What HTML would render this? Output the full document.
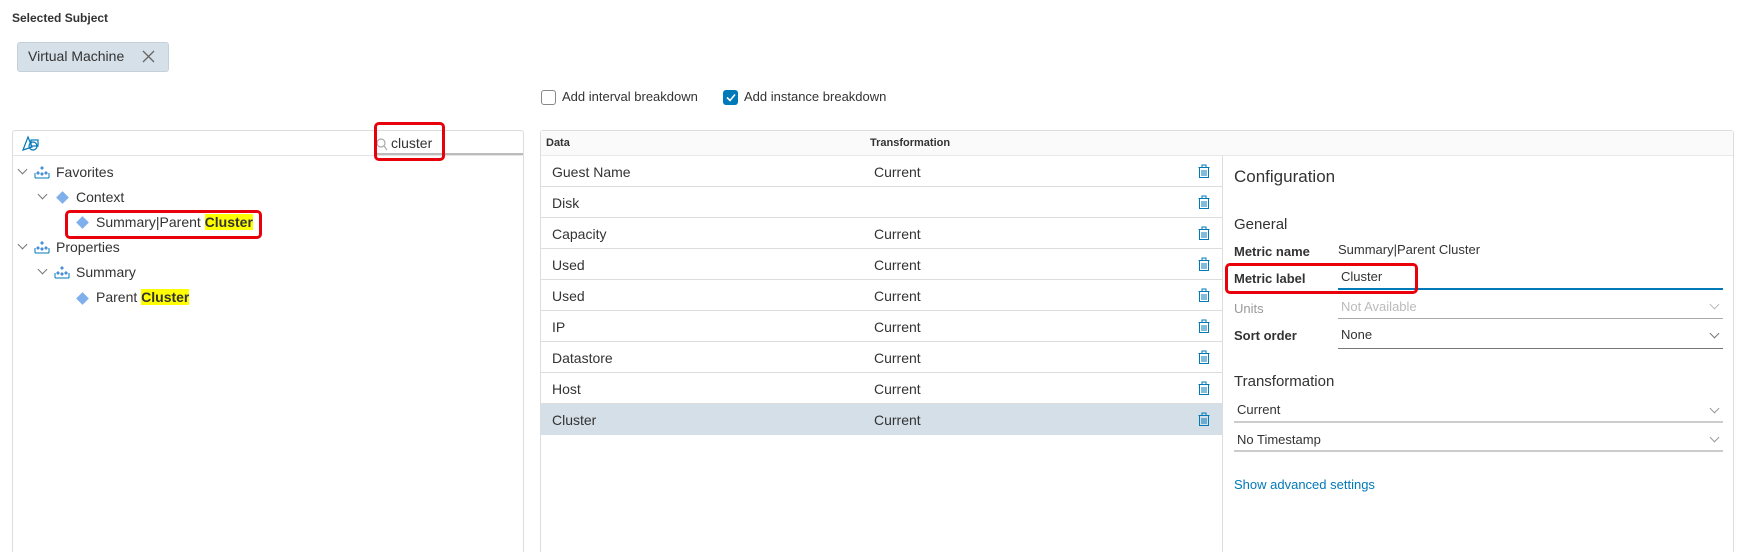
<!DOCTYPE html>
<html style="width:1741px;height:552px;overflow:hidden"><head><meta charset="utf-8"><style>
*{box-sizing:border-box;margin:0;padding:0}
body{width:1741px;height:552px;background:#fff;font-family:"Liberation Sans",sans-serif;color:#333;position:relative;overflow:hidden;font-size:14px}
.a{position:absolute;white-space:nowrap}
.b{font-weight:bold}
.red{position:absolute;border:3px solid #e8000b;border-radius:5px}
.row{position:absolute;left:541px;width:681px;height:31px;border-bottom:1px solid #ddd}
.row span{position:absolute;top:8px}
.trash{position:absolute;left:657px;top:8px}
.ul{position:absolute;height:1px;background:#aaa}
.chev{position:absolute;width:7px;height:7px;border-right:1.3px solid #777;border-bottom:1.3px solid #777;transform:rotate(45deg)}
.dia{position:absolute;width:9px;height:9px;background:#7fb0ec;transform:rotate(45deg)}
.hl{background:#ffff00;font-weight:bold}
</style></head><body>
<div class="a b" style="left:12px;top:11px;font-size:12px;color:#333">Selected Subject</div>
<div class="a" style="left:17px;top:42px;width:152px;height:30px;background:#d6e0e8;border:1px solid #c5d1da;border-radius:3px"></div>
<div class="a" style="left:28px;top:48px;font-size:14px">Virtual Machine</div>
<svg class="a" style="left:142px;top:50px" width="13" height="13"><path d="M1 1L12 12M12 1L1 12" stroke="#666" stroke-width="1.3"/></svg>

<div class="a" style="left:541px;top:90px;width:15px;height:15px;border:1px solid #888;border-radius:3px"></div>
<div class="a" style="left:562px;top:89px;font-size:13px">Add interval breakdown</div>
<div class="a" style="left:723px;top:90px;width:15px;height:15px;background:#0079b8;border-radius:3px"></div>
<svg class="a" style="left:726px;top:93px" width="10" height="9"><path d="M1 4.5L4 7.5L9 1.5" stroke="#fff" stroke-width="1.6" fill="none"/></svg>
<div class="a" style="left:744px;top:89px;font-size:13px">Add instance breakdown</div>

<!-- left panel -->
<div class="a" style="left:12px;top:130px;width:512px;height:422px;border:1px solid #ddd;border-bottom:none;border-radius:3px 3px 0 0"></div>
<div class="a" style="left:12px;top:155px;width:512px;height:1px;background:#e4e4e4"></div>
<svg class="a" style="left:22px;top:135px" width="18" height="17"><path d="M1 15L6 2L10 12Z" fill="none" stroke="#0079b8" stroke-width="1.2"/><circle cx="11" cy="11" r="4" fill="none" stroke="#0079b8" stroke-width="1.2"/><rect x="9" y="5" width="7" height="6" fill="none" stroke="#0079b8" stroke-width="1.2"/></svg>
<div class="ul" style="left:377px;top:153px;width:146px;height:2px;background:#bbb"></div>
<svg class="a" style="left:376px;top:138px" width="12" height="13"><circle cx="5" cy="5" r="4" fill="none" stroke="#aaa" stroke-width="1.2"/><path d="M8 8L11 12" stroke="#aaa" stroke-width="1.2"/></svg>
<div class="a" style="left:391px;top:135px;font-size:14px">cluster</div>
<div class="red" style="left:374px;top:122px;width:71px;height:39px"></div>

<div class="chev" style="left:19px;top:166px"></div>
<svg class="a" style="left:34px;top:165px" width="16" height="14"><path d="M1 13V8M15 13V8M1 13H15" stroke="#0079b8" fill="none"/><path d="M8 1l2 2-2 2-2-2zM4 6l2 2-2 2-2-2zM12 6l2 2-2 2-2-2zM8 7l2 2-2 2-2-2z" fill="#4a90d9"/></svg>
<div class="a" style="left:56px;top:164px">Favorites</div>
<div class="chev" style="left:39px;top:191px"></div>
<div class="dia" style="left:58px;top:193px"></div>
<div class="a" style="left:76px;top:189px">Context</div>
<div class="dia" style="left:78px;top:218px"></div>
<div class="a" style="left:96px;top:214px">Summary|Parent <span class="hl">Cluster</span></div>
<div class="red" style="left:65px;top:210px;width:197px;height:29px"></div>
<div class="chev" style="left:19px;top:241px"></div>
<svg class="a" style="left:34px;top:240px" width="16" height="14"><path d="M1 13V8M15 13V8M1 13H15" stroke="#0079b8" fill="none"/><path d="M8 1l2 2-2 2-2-2zM4 6l2 2-2 2-2-2zM12 6l2 2-2 2-2-2zM8 7l2 2-2 2-2-2z" fill="#4a90d9"/></svg>
<div class="a" style="left:56px;top:239px">Properties</div>
<div class="chev" style="left:39px;top:266px"></div>
<svg class="a" style="left:54px;top:265px" width="16" height="14"><path d="M1 13V8M15 13V8M1 13H15" stroke="#0079b8" fill="none"/><path d="M8 1l2 2-2 2-2-2zM4 6l2 2-2 2-2-2zM12 6l2 2-2 2-2-2zM8 7l2 2-2 2-2-2z" fill="#4a90d9"/></svg>
<div class="a" style="left:76px;top:264px">Summary</div>
<div class="dia" style="left:78px;top:294px"></div>
<div class="a" style="left:96px;top:289px">Parent <span class="hl">Cluster</span></div>

<!-- table -->
<div class="a" style="left:540px;top:130px;width:1194px;height:422px;border:1px solid #ddd;border-bottom:none;border-radius:3px 3px 0 0"></div>
<div class="a" style="left:541px;top:131px;width:1192px;height:25px;background:#fafafa;border-bottom:1px solid #e8e8e8"></div>
<div class="a b" style="left:546px;top:137px;font-size:11px">Data</div>
<div class="a b" style="left:870px;top:137px;font-size:11px">Transformation</div>
<div class="a" style="left:1222px;top:156px;width:1px;height:400px;background:#ddd"></div>

<div class="row" style="top:156px"><span style="left:11px">Guest Name</span><span style="left:333px">Current</span><svg class="trash" width="12" height="14"><path d="M0.5 3.5H11.5M4 3V1H8V3M1.5 4V13.5H10.5V4M4 6V12M6 6V12M8 6V12" stroke="#0079b8" fill="none"/></svg></div>
<div class="row" style="top:187px"><span style="left:11px">Disk</span><svg class="trash" width="12" height="14"><path d="M0.5 3.5H11.5M4 3V1H8V3M1.5 4V13.5H10.5V4M4 6V12M6 6V12M8 6V12" stroke="#0079b8" fill="none"/></svg></div>
<div class="row" style="top:218px"><span style="left:11px">Capacity</span><span style="left:333px">Current</span><svg class="trash" width="12" height="14"><path d="M0.5 3.5H11.5M4 3V1H8V3M1.5 4V13.5H10.5V4M4 6V12M6 6V12M8 6V12" stroke="#0079b8" fill="none"/></svg></div>
<div class="row" style="top:249px"><span style="left:11px">Used</span><span style="left:333px">Current</span><svg class="trash" width="12" height="14"><path d="M0.5 3.5H11.5M4 3V1H8V3M1.5 4V13.5H10.5V4M4 6V12M6 6V12M8 6V12" stroke="#0079b8" fill="none"/></svg></div>
<div class="row" style="top:280px"><span style="left:11px">Used</span><span style="left:333px">Current</span><svg class="trash" width="12" height="14"><path d="M0.5 3.5H11.5M4 3V1H8V3M1.5 4V13.5H10.5V4M4 6V12M6 6V12M8 6V12" stroke="#0079b8" fill="none"/></svg></div>
<div class="row" style="top:311px"><span style="left:11px">IP</span><span style="left:333px">Current</span><svg class="trash" width="12" height="14"><path d="M0.5 3.5H11.5M4 3V1H8V3M1.5 4V13.5H10.5V4M4 6V12M6 6V12M8 6V12" stroke="#0079b8" fill="none"/></svg></div>
<div class="row" style="top:342px"><span style="left:11px">Datastore</span><span style="left:333px">Current</span><svg class="trash" width="12" height="14"><path d="M0.5 3.5H11.5M4 3V1H8V3M1.5 4V13.5H10.5V4M4 6V12M6 6V12M8 6V12" stroke="#0079b8" fill="none"/></svg></div>
<div class="row" style="top:373px"><span style="left:11px">Host</span><span style="left:333px">Current</span><svg class="trash" width="12" height="14"><path d="M0.5 3.5H11.5M4 3V1H8V3M1.5 4V13.5H10.5V4M4 6V12M6 6V12M8 6V12" stroke="#0079b8" fill="none"/></svg></div>
<div class="row" style="top:404px;background:#d4dfe7;border-bottom:none"><span style="left:11px">Cluster</span><span style="left:333px">Current</span><svg class="trash" width="12" height="14"><path d="M0.5 3.5H11.5M4 3V1H8V3M1.5 4V13.5H10.5V4M4 6V12M6 6V12M8 6V12" stroke="#0079b8" fill="none"/></svg></div>

<!-- config -->
<div class="a" style="left:1234px;top:167px;font-size:17px">Configuration</div>
<div class="a" style="left:1234px;top:216px;font-size:15px">General</div>
<div class="a b" style="left:1234px;top:244px;font-size:13px">Metric name</div>
<div class="a" style="left:1338px;top:242px;font-size:13px">Summary|Parent Cluster</div>
<div class="a b" style="left:1234px;top:271px;font-size:13px">Metric label</div>
<div class="a" style="left:1341px;top:269px;font-size:13px">Cluster</div>
<div class="ul" style="left:1338px;top:288px;width:385px;height:2px;background:#0079b8"></div>
<div class="red" style="left:1225px;top:263px;width:193px;height:31px"></div>
<div class="a" style="left:1234px;top:301px;font-size:13px;color:#999">Units</div>
<div class="a" style="left:1341px;top:299px;font-size:13px;color:#bbb">Not Available</div>
<div class="ul" style="left:1338px;top:318px;width:385px"></div>
<div class="a b" style="left:1234px;top:328px;font-size:13px">Sort order</div>
<div class="a" style="left:1341px;top:327px;font-size:13px">None</div>
<div class="ul" style="left:1338px;top:348px;width:385px;background:#777"></div>
<div class="a" style="left:1234px;top:373px;font-size:15px">Transformation</div>
<div class="a" style="left:1237px;top:402px;font-size:13px">Current</div>
<div class="ul" style="left:1234px;top:421px;width:489px;height:2px;background:#ccc"></div>
<div class="a" style="left:1237px;top:432px;font-size:13px">No Timestamp</div>
<div class="ul" style="left:1234px;top:450px;width:489px;height:2px;background:#ccc"></div>
<div class="chev" style="left:1711px;top:301px;border-color:#bbb"></div>
<div class="chev" style="left:1711px;top:330px"></div>
<div class="chev" style="left:1711px;top:405px;border-color:#999"></div>
<div class="chev" style="left:1711px;top:434px;border-color:#999"></div>
<div class="a" style="left:1234px;top:477px;font-size:13px;color:#0079b8">Show advanced settings</div>
</body></html>
